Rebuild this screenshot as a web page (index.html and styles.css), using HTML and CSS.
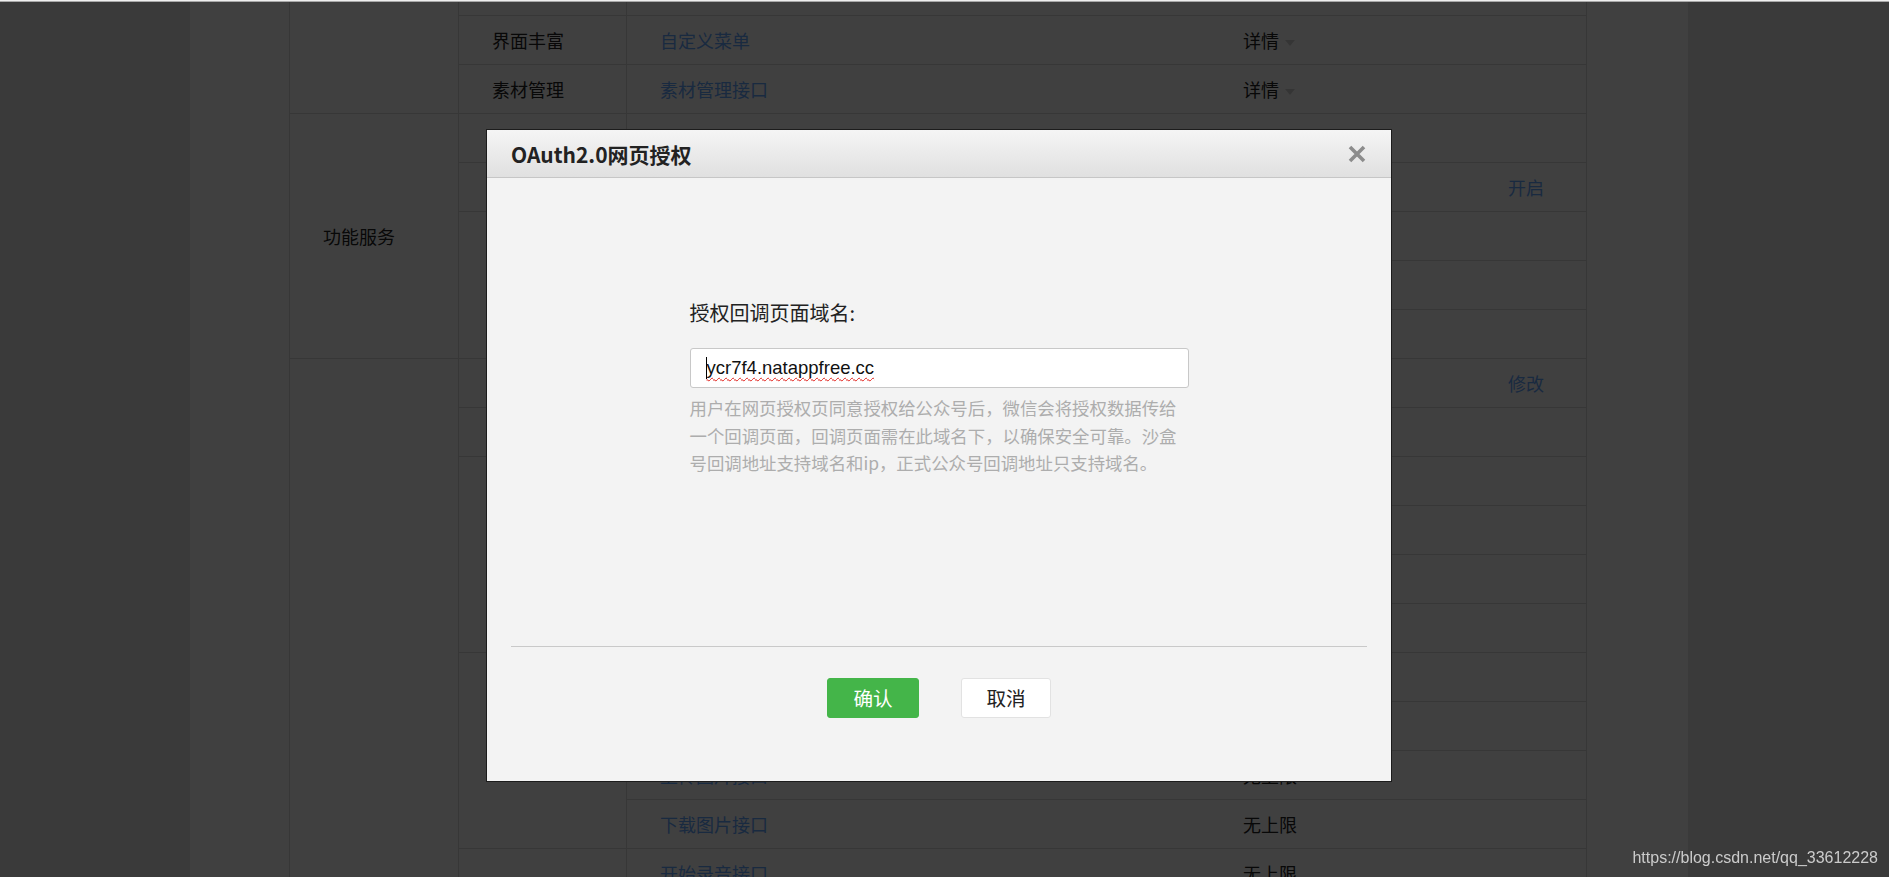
FILE: index.html
```html
<!DOCTYPE html>
<html lang="zh-CN">
<head>
<meta charset="utf-8">
<title>接口权限表</title>
<link rel="stylesheet" href="styles.css">
</head>
<body>
<div class="top-edge"></div>

<main class="page">
  <table class="perm-table">
    <colgroup>
      <col class="c-cat"><col class="c-group"><col class="c-name"><col class="c-quota"><col class="c-op">
    </colgroup>
    <tbody>
      <!-- 对话服务 -->
      <tr>
        <td class="cat" rowspan="6">对话服务</td>
        <td class="group" rowspan="2">用户管理</td>
        <td class="name"><a href="#">获取用户列表</a></td>
        <td class="quota">无上限</td>
        <td class="op"></td>
      </tr>
      <tr>
        <td class="name"><a href="#">获取用户地理位置</a></td>
        <td class="quota">无上限</td>
        <td class="op"><a href="#">开启</a></td>
      </tr>
      <tr>
        <td class="group" rowspan="2">推广支持</td>
        <td class="name"><a href="#">生成带参数二维码</a></td>
        <td class="quota">详情<i class="caret"></i></td>
        <td class="op"></td>
      </tr>
      <tr>
        <td class="name"><a href="#">长链接转短链接接口</a></td>
        <td class="quota">详情<i class="caret"></i></td>
        <td class="op"></td>
      </tr>
      <tr>
        <td class="group">界面丰富</td>
        <td class="name"><a href="#">自定义菜单</a></td>
        <td class="quota">详情<i class="caret"></i></td>
        <td class="op"></td>
      </tr>
      <tr>
        <td class="group">素材管理</td>
        <td class="name"><a href="#">素材管理接口</a></td>
        <td class="quota">详情<i class="caret"></i></td>
        <td class="op"></td>
      </tr>

      <!-- 功能服务 -->
      <tr>
        <td class="cat" rowspan="5">功能服务</td>
        <td class="group">智能接口</td>
        <td class="name"><a href="#">语义理解接口</a></td>
        <td class="quota">无上限</td>
        <td class="op"></td>
      </tr>
      <tr>
        <td class="group">设备功能</td>
        <td class="name"><a href="#">设备功能接口</a></td>
        <td class="quota">详情<i class="caret"></i></td>
        <td class="op"><a href="#">开启</a></td>
      </tr>
      <tr>
        <td class="group" rowspan="3">多客服</td>
        <td class="name"><a href="#">获取客服聊天记录</a></td>
        <td class="quota">无上限</td>
        <td class="op"></td>
      </tr>
      <tr>
        <td class="name"><a href="#">客服管理</a></td>
        <td class="quota">无上限</td>
        <td class="op"></td>
      </tr>
      <tr>
        <td class="name"><a href="#">会话控制</a></td>
        <td class="quota">无上限</td>
        <td class="op"></td>
      </tr>

      <!-- 网页服务 -->
      <tr>
        <td class="cat" rowspan="22">网页服务</td>
        <td class="group">网页帐号</td>
        <td class="name"><a href="#">网页授权获取用户基本信息</a></td>
        <td class="quota">无上限</td>
        <td class="op"><a href="#">修改</a></td>
      </tr>
      <tr>
        <td class="group">基础接口</td>
        <td class="name"><a href="#">判断当前客户端是否支持指定JS接口</a></td>
        <td class="quota">无上限</td>
        <td class="op"></td>
      </tr>
      <tr>
        <td class="group" rowspan="4">分享接口</td>
        <td class="name"><a href="#">获取“分享到朋友圈”按钮点击状态及自定义分享内容接口</a></td>
        <td class="quota">无上限</td>
        <td class="op"></td>
      </tr>
      <tr>
        <td class="name"><a href="#">获取“分享给朋友”按钮点击状态及自定义分享内容接口</a></td>
        <td class="quota">无上限</td>
        <td class="op"></td>
      </tr>
      <tr>
        <td class="name"><a href="#">获取“分享到QQ”按钮点击状态及自定义分享内容接口</a></td>
        <td class="quota">无上限</td>
        <td class="op"></td>
      </tr>
      <tr>
        <td class="name"><a href="#">获取“分享到腾讯微博”按钮点击状态及自定义分享内容接口</a></td>
        <td class="quota">无上限</td>
        <td class="op"></td>
      </tr>
      <tr>
        <td class="group" rowspan="4">图像接口</td>
        <td class="name"><a href="#">拍照或从手机相册中选图接口</a></td>
        <td class="quota">无上限</td>
        <td class="op"></td>
      </tr>
      <tr>
        <td class="name"><a href="#">预览图片接口</a></td>
        <td class="quota">无上限</td>
        <td class="op"></td>
      </tr>
      <tr>
        <td class="name"><a href="#">上传图片接口</a></td>
        <td class="quota">无上限</td>
        <td class="op"></td>
      </tr>
      <tr>
        <td class="name"><a href="#">下载图片接口</a></td>
        <td class="quota">无上限</td>
        <td class="op"></td>
      </tr>
      <tr>
        <td class="group" rowspan="7">音频接口</td>
        <td class="name"><a href="#">开始录音接口</a></td>
        <td class="quota">无上限</td>
        <td class="op"></td>
      </tr>
      <tr>
        <td class="name"><a href="#">停止录音接口</a></td>
        <td class="quota">无上限</td>
        <td class="op"></td>
      </tr>
      <tr>
        <td class="name"><a href="#">播放语音接口</a></td>
        <td class="quota">无上限</td>
        <td class="op"></td>
      </tr>
      <tr>
        <td class="name"><a href="#">暂停播放接口</a></td>
        <td class="quota">无上限</td>
        <td class="op"></td>
      </tr>
      <tr>
        <td class="name"><a href="#">停止播放接口</a></td>
        <td class="quota">无上限</td>
        <td class="op"></td>
      </tr>
      <tr>
        <td class="name"><a href="#">上传语音接口</a></td>
        <td class="quota">无上限</td>
        <td class="op"></td>
      </tr>
      <tr>
        <td class="name"><a href="#">下载语音接口</a></td>
        <td class="quota">无上限</td>
        <td class="op"></td>
      </tr>
      <tr>
        <td class="group">智能接口</td>
        <td class="name"><a href="#">识别音频并返回识别结果接口</a></td>
        <td class="quota">无上限</td>
        <td class="op"></td>
      </tr>
      <tr>
        <td class="group">设备信息</td>
        <td class="name"><a href="#">获取网络状态接口</a></td>
        <td class="quota">无上限</td>
        <td class="op"></td>
      </tr>
      <tr>
        <td class="group" rowspan="2">地理位置</td>
        <td class="name"><a href="#">使用微信内置地图查看位置接口</a></td>
        <td class="quota">无上限</td>
        <td class="op"></td>
      </tr>
      <tr>
        <td class="name"><a href="#">获取地理位置接口</a></td>
        <td class="quota">无上限</td>
        <td class="op"></td>
      </tr>
      <tr>
        <td class="group">界面操作</td>
        <td class="name"><a href="#">隐藏右上角菜单接口</a></td>
        <td class="quota">无上限</td>
        <td class="op"></td>
      </tr>
    </tbody>
  </table>
</main>

<div class="mask"></div>

<section class="dialog" role="dialog" aria-labelledby="dlg-title">
  <header class="dialog-hd">
    <h3 class="dialog-title" id="dlg-title">OAuth2.0网页授权</h3>
    <button class="dialog-close" type="button" aria-label="关闭">
      <svg width="18" height="18" viewBox="0 0 18 18"><path d="M2 2L16 16M16 2L2 16" stroke="#8c8c8c" stroke-width="3.6" fill="none"/></svg>
    </button>
  </header>
  <div class="dialog-bd">
    <div class="field">
      <label class="field-label">授权回调页面域名:</label>
      <div class="field-input"><span class="text-caret"></span><span class="misspelt">ycr7f4.natappfree.cc</span></div>
      <p class="field-tip">用户在网页授权页同意授权给公众号后，微信会将授权数据传给一个回调页面，回调页面需在此域名下，以确保安全可靠。沙盒号回调地址支持域名和ip，正式公众号回调地址只支持域名。</p>
    </div>
  </div>
  <footer class="dialog-ft">
    <button class="btn btn-primary" type="button">确认</button>
    <button class="btn btn-default" type="button">取消</button>
  </footer>
</section>

<div class="watermark">https://blog.csdn.net/qq_33612228</div>
</body>
</html>
```

FILE: styles.css
```css
html,
body {
  margin: 0;
  height: 100%;
  overflow: hidden;
}

body {
  background: #e6e6e6;
  color: #222;
  font-family: "Noto Sans CJK SC", "Microsoft YaHei", sans-serif;
}

/* thin light edge along the top of the window */
.top-edge {
  position: fixed;
  top: 0;
  left: 0;
  right: 0;
  height: 1px;
  background: #efefef;
  border-bottom: 1px solid #a9a9a9;
  z-index: 30;
}

/* page body, scrolled part-way down the permission table */
.page {
  width: 1498px;
  box-sizing: border-box;
  margin: -180px 0 0 190px;
  padding: 0 101px 0 99px;
  background: #fff;
}

.perm-table {
  width: 1298px;
  table-layout: fixed;
  border-collapse: separate;
  border-spacing: 0;
  border-left: 1px solid #d9d9d9;
  border-right: 1px solid #d9d9d9;
  font-size: 18px;
}

.c-cat { width: 169px; }
.c-group { width: 168px; }
.c-name { width: 583px; }
.c-quota { width: 200px; }
.c-op { width: 176px; }

.perm-table tr {
  height: 49px;
}

.perm-table td {
  padding: 0 0 0 33px;
  border-bottom: 1px solid #d9d9d9;
  vertical-align: middle;
  line-height: 26px;
  white-space: nowrap;
  overflow: hidden;
}

.perm-table .cat,
.perm-table .group {
  border-right: 1px solid #d9d9d9;
}

.perm-table a {
  color: #66a6ff;
  text-decoration: none;
}

.perm-table .op {
  padding: 0 42px 0 0;
  text-align: right;
}

.caret {
  display: inline-block;
  vertical-align: middle;
  margin-left: 6px;
  width: 0;
  height: 0;
  border-left: 5.5px solid transparent;
  border-right: 5.5px solid transparent;
  border-top: 6px solid #d4d4d4;
}

/* dialog backdrop */
.mask {
  position: fixed;
  inset: 0;
  background: rgba(0, 0, 0, 0.75);
  z-index: 10;
}

.dialog {
  position: fixed;
  left: 486px;
  top: 129px;
  width: 906px;
  box-sizing: border-box;
  border: 1px solid #1c1c1c;
  background: #f3f3f3;
  z-index: 20;
}

.dialog-hd {
  height: 48px;
  box-sizing: border-box;
  padding: 0 24px;
  display: flex;
  align-items: center;
  justify-content: space-between;
  background: linear-gradient(#f5f5f5, #e0e0e0);
  border-bottom: 1px solid #c6c6c6;
}

.dialog-title {
  margin: 0;
  font-size: 21px;
  line-height: 30px;
  font-weight: bold;
  color: #222;
}

.dialog-close {
  width: 20px;
  height: 20px;
  padding: 0;
  margin: 0;
  border: 0;
  background: none;
  display: flex;
  align-items: center;
  justify-content: center;
}

.dialog-bd {
  height: 468px;
  box-sizing: border-box;
  padding-top: 121px;
}

.field {
  width: 499px;
  margin: 0 auto;
}

.field-label {
  display: block;
  font-size: 20px;
  line-height: 28px;
  color: #222;
}

.field-input {
  margin-top: 21px;
  height: 40px;
  box-sizing: border-box;
  padding-left: 15px;
  display: flex;
  align-items: center;
  background: #fff;
  border: 1px solid #c8c8c8;
  border-radius: 3px;
  font-family: "Liberation Sans", Arial, sans-serif;
  font-size: 18.5px;
  color: #111;
}

.text-caret {
  width: 1px;
  height: 22px;
  background: #000;
}

.misspelt {
  line-height: 24px;
  text-decoration: underline wavy #e0201a;
  text-decoration-thickness: 1px;
  text-underline-offset: 3px;
  text-decoration-skip-ink: none;
}

.field-tip {
  margin: 6px 0 0;
  font-size: 17.4px;
  line-height: 27.5px;
  color: #adadad;
}

.dialog-ft {
  margin: 0 24px;
  padding: 31px 0 63px;
  border-top: 1px solid #c9c9c9;
  display: flex;
  justify-content: center;
  gap: 42px;
}

.btn {
  height: 40px;
  box-sizing: border-box;
  padding: 0;
  border-radius: 3px;
  font-family: inherit;
  font-size: 19.6px;
  line-height: 38px;
}

.btn-primary {
  width: 92px;
  background: #44b549;
  border: 1px solid #44b549;
  color: #fff;
}

.btn-default {
  width: 90px;
  background: #fff;
  border: 1px solid #e2e2e2;
  color: #222;
}

.watermark {
  position: fixed;
  right: 11px;
  bottom: 10px;
  font: 16px/19px "Liberation Sans", Arial, sans-serif;
  color: #cbcbcb;
  z-index: 30;
}
```
